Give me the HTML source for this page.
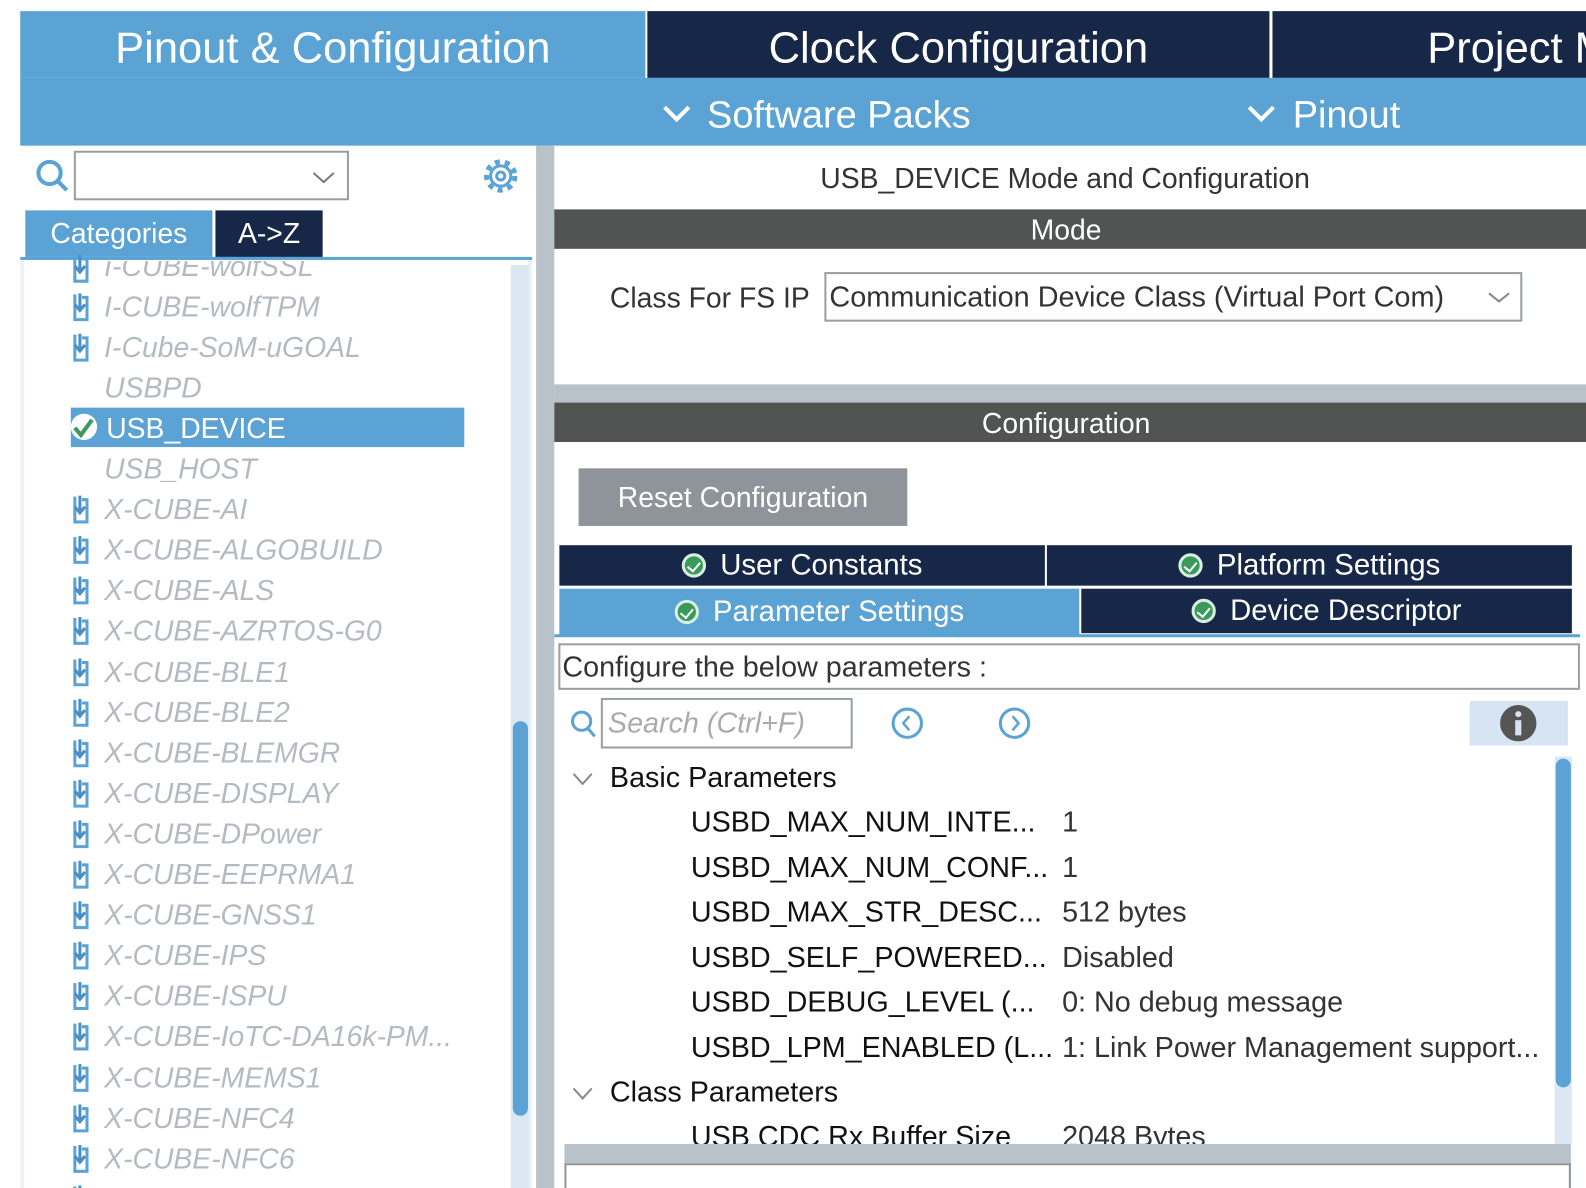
<!DOCTYPE html>
<html><head><meta charset="utf-8"><style>
*{margin:0;padding:0;box-sizing:border-box}
html,body{width:1586px;height:1188px;overflow:hidden}
body{background:#fff;font-family:"Liberation Sans",Arial,sans-serif;position:relative}
#w{position:absolute;left:0;top:0;width:1568px;height:1175px;transform:scale(1.0115);transform-origin:0 0}
.a{position:absolute;white-space:nowrap}
.c{display:flex;align-items:center;justify-content:center}
.li{position:absolute;left:103px;font-size:28px;font-style:italic;color:#b3bac2;line-height:40px}
.pn{position:absolute;left:683px;font-size:28.4px;color:#111;line-height:40px}
.pv{position:absolute;left:1050px;font-size:28.4px;color:#333;line-height:40px}
.ok{display:inline-block;width:24px;height:24px;border-radius:50%;background:#3a9a5b;border:3px solid #d8eee0;margin-right:14px;position:relative}
.ok:after{content:"";position:absolute;left:5px;top:3px;width:6px;height:10px;border-right:2px solid #fff;border-bottom:2px solid #fff;transform:rotate(40deg)}
.t{font-size:29px}
</style></head><body><div id="w">
<div class="a c" style="left:20px;top:11px;width:618px;height:66px;background:#5ba3d5;color:#fff;font-size:43px;padding-top:8px">Pinout &amp; Configuration</div>
<div class="a c" style="left:640px;top:11px;width:615px;height:66px;background:#162748;color:#fff;font-size:43px;padding-top:8px">Clock Configuration</div>
<div class="a" style="left:1258px;top:11px;width:310px;height:66px;background:#162748;color:#fff;font-size:43px;line-height:74px;padding-left:153px;overflow:hidden">Project Manager</div>
<div class="a" style="left:20px;top:77px;width:1548px;height:67px;background:#5ba3d5"></div>
<svg class="a" style="left:654px;top:102px" width="30" height="20"><path d="M3 4 L15 16 L27 4" stroke="#fff" stroke-width="4" fill="none"/></svg>
<div class="a" style="left:699px;top:92px;color:#fff;font-size:37.5px">Software Packs</div>
<svg class="a" style="left:1232px;top:102px" width="30" height="20"><path d="M3 4 L15 16 L27 4" stroke="#fff" stroke-width="4" fill="none"/></svg>
<div class="a" style="left:1278px;top:92px;color:#fff;font-size:37.5px">Pinout</div>

<svg class="a" style="left:34px;top:156px" width="36" height="36"><circle cx="15" cy="15" r="11" stroke="#5ba3d5" stroke-width="4" fill="none"/><path d="M23 23 L32 32" stroke="#5ba3d5" stroke-width="4"/></svg>
<div class="a" style="left:73px;top:149px;width:272px;height:49px;border:2px solid #9a9ea3"></div>
<svg class="a" style="left:308px;top:168px" width="24" height="14"><path d="M2 3 L12 12 L22 3" stroke="#777" stroke-width="2" fill="none"/></svg>
<svg class="a" style="left:476px;top:155px" width="38" height="38"><circle cx="19" cy="19" r="14" stroke="#5ba3d5" stroke-width="5" fill="none" stroke-dasharray="5 5"/><circle cx="19" cy="19" r="10" stroke="#5ba3d5" stroke-width="3" fill="none"/><circle cx="19" cy="19" r="4" stroke="#5ba3d5" stroke-width="3" fill="none"/></svg>
<div class="a c" style="left:25px;top:208px;width:185px;height:46px;background:#5ba3d5;color:#fff;font-size:28px">Categories</div>
<div class="a c" style="left:213px;top:208px;width:106px;height:46px;background:#162748;color:#fff;font-size:28px">A-&gt;Z</div>
<div class="a" style="left:20px;top:254px;width:506px;height:3px;background:#5ba3d5"></div>
<div class="a" style="left:20px;top:257px;width:506px;height:931px;border:4px solid #eef1f5;border-top:none"></div>
<div class="a" style="left:505px;top:262px;width:18px;height:926px;background:#dce7f4"></div>
<div class="a" style="left:507px;top:713px;width:15px;height:390px;background:#5ba3d5;border-radius:8px"></div>
<div class="a" style="left:28px;top:258px;width:476px;height:930px;overflow:hidden">
<div style="position:relative;left:-28px;top:-258px">
<div class="li" style="top:244px">I-CUBE-wolfSSL</div>
<div class="li" style="top:284px">I-CUBE-wolfTPM</div>
<div class="li" style="top:324px">I-Cube-SoM-uGOAL</div>
<div class="li" style="top:364px">USBPD</div>
<div class="a" style="left:70px;top:403px;width:389px;height:39px;background:#5ba3d5"></div>
<div class="a" style="left:70px;top:409px;width:26px;height:26px;border-radius:50%;background:#fff"></div>
<svg class="a" style="left:70px;top:409px" width="26" height="26"><path d="M4 14 L10 21 L21 6" stroke="#3a9a5b" stroke-width="4" fill="none"/></svg>
<div class="li" style="top:404px;font-style:normal;color:#fff;left:105px">USB_DEVICE</div>
<div class="li" style="top:444px">USB_HOST</div>
<div class="li" style="top:484px">X-CUBE-AI</div>
<div class="li" style="top:524px">X-CUBE-ALGOBUILD</div>
<div class="li" style="top:564px">X-CUBE-ALS</div>
<div class="li" style="top:604px">X-CUBE-AZRTOS-G0</div>
<div class="li" style="top:645px">X-CUBE-BLE1</div>
<div class="li" style="top:685px">X-CUBE-BLE2</div>
<div class="li" style="top:725px">X-CUBE-BLEMGR</div>
<div class="li" style="top:765px">X-CUBE-DISPLAY</div>
<div class="li" style="top:805px">X-CUBE-DPower</div>
<div class="li" style="top:845px">X-CUBE-EEPRMA1</div>
<div class="li" style="top:885px">X-CUBE-GNSS1</div>
<div class="li" style="top:925px">X-CUBE-IPS</div>
<div class="li" style="top:965px">X-CUBE-ISPU</div>
<div class="li" style="top:1005px">X-CUBE-IoTC-DA16k-PM...</div>
<div class="li" style="top:1046px">X-CUBE-MEMS1</div>
<div class="li" style="top:1086px">X-CUBE-NFC4</div>
<div class="li" style="top:1126px">X-CUBE-NFC6</div>
</div></div>
<svg class="a" style="left:70px;top:250px" width="22" height="938">
<defs><g id="d"><path d="M4 3 L4 28 L16 28 L16 6 L11 6" stroke="#5ba3d5" stroke-width="3" fill="none"/><path d="M9 2 L9 18 M4 13 L9 19 L14 13" stroke="#4a8fc4" stroke-width="3" fill="none"/></g></defs>
<use href="#d" y="0"/><use href="#d" y="38"/><use href="#d" y="78"/>
<use href="#d" y="238"/><use href="#d" y="278"/><use href="#d" y="318"/><use href="#d" y="358"/><use href="#d" y="399"/><use href="#d" y="439"/><use href="#d" y="479"/><use href="#d" y="519"/><use href="#d" y="559"/><use href="#d" y="599"/><use href="#d" y="639"/><use href="#d" y="679"/><use href="#d" y="719"/><use href="#d" y="759"/><use href="#d" y="800"/><use href="#d" y="840"/><use href="#d" y="880"/><use href="#d" y="920"/>
</svg>

<div class="a" style="left:530px;top:144px;width:18px;height:1044px;background:#b9c1c9"></div>

<div class="a c" style="left:548px;top:155px;width:1010px;height:44px;font-size:28px;color:#333">USB_DEVICE Mode and Configuration</div>
<div class="a c" style="left:548px;top:207px;width:1020px;height:39px;background:#525453;color:#fff;font-size:28px;padding-right:8px;padding-top:3px">Mode</div>
<div class="a" style="left:603px;top:275px;font-size:28px;color:#333;line-height:40px">Class For FS IP</div>
<div class="a" style="left:815px;top:269px;width:690px;height:49px;border:2px solid #9a9ea3;font-size:28.5px;color:#333;line-height:46px;padding-left:3px;overflow:hidden">Communication Device Class (Virtual Port Com)</div>
<svg class="a" style="left:1470px;top:287px" width="24" height="14"><path d="M2 3 L12 11 L22 3" stroke="#888" stroke-width="2" fill="none"/></svg>
<div class="a" style="left:548px;top:380px;width:1020px;height:18px;background:#b9c1c9"></div>
<div class="a c" style="left:548px;top:398px;width:1020px;height:39px;background:#525453;color:#fff;font-size:28px;padding-right:8px;padding-top:3px">Configuration</div>
<div class="a c" style="left:572px;top:463px;width:325px;height:57px;background:#8f949a;color:#fff;font-size:28px">Reset Configuration</div>

<div class="a c t" style="left:553px;top:539px;width:480px;height:40px;background:#162748;color:#fff"><span class="ok"></span>User Constants</div>
<div class="a c t" style="left:1035px;top:539px;width:519px;height:40px;background:#162748;color:#fff"><span class="ok"></span>Platform Settings</div>
<div class="a c t" style="left:553px;top:582px;width:514px;height:46px;background:#5ba3d5;color:#fff"><span class="ok"></span>Parameter Settings</div>
<div class="a c t" style="left:1069px;top:582px;width:485px;height:44px;background:#162748;color:#fff"><span class="ok"></span>Device Descriptor</div>
<div class="a" style="left:548px;top:627px;width:1014px;height:3px;background:#5ba3d5"></div>
<div class="a" style="left:552px;top:636px;width:1010px;height:46px;border:2px solid #9a9ea3;font-size:28.4px;color:#333;line-height:44px;padding-left:2px">Configure the below parameters :</div>
<svg class="a" style="left:563px;top:701px" width="28" height="30"><circle cx="12" cy="12" r="9" stroke="#5ba3d5" stroke-width="3" fill="none"/><path d="M18 19 L25 27" stroke="#5ba3d5" stroke-width="3"/></svg>
<div class="a" style="left:594px;top:690px;width:249px;height:50px;border:2px solid #9a9ea3;font-size:28.4px;font-style:italic;color:#aaa;line-height:46px;padding-left:5px;overflow:hidden">Search (Ctrl+F)</div>
<svg class="a" style="left:880px;top:698px" width="34" height="34"><circle cx="17" cy="17" r="14" stroke="#5ba3d5" stroke-width="3" fill="none"/><path d="M19 10 L13 17 L19 24" stroke="#5ba3d5" stroke-width="2.5" fill="none"/></svg>
<svg class="a" style="left:986px;top:698px" width="34" height="34"><circle cx="17" cy="17" r="14" stroke="#5ba3d5" stroke-width="3" fill="none"/><path d="M15 10 L21 17 L15 24" stroke="#5ba3d5" stroke-width="2.5" fill="none"/></svg>
<div class="a" style="left:1453px;top:693px;width:97px;height:44px;background:#d6e4f3"></div>
<svg class="a" style="left:1483px;top:697px" width="36" height="36"><circle cx="18" cy="18" r="18" fill="#555"/><circle cx="18" cy="9" r="3" fill="#d6e4f3"/><rect x="15" y="15" width="6" height="15" fill="#d6e4f3"/></svg>

<div class="a" style="left:1537px;top:748px;width:17px;height:383px;background:#dce7f4"></div>
<div class="a" style="left:1538px;top:750px;width:15px;height:325px;background:#5ba3d5;border-radius:8px"></div>
<svg class="a" style="left:565px;top:762px" width="24" height="16"><path d="M2 3 L11 13 L20 3" stroke="#888" stroke-width="2" fill="none"/></svg>
<div class="a" style="left:603px;top:749px;font-size:28.4px;color:#111;line-height:40px">Basic Parameters</div>
<div class="pn" style="top:793px">USBD_MAX_NUM_INTE...</div><div class="pv" style="top:793px">1</div>
<div class="pn" style="top:838px">USBD_MAX_NUM_CONF...</div><div class="pv" style="top:838px">1</div>
<div class="pn" style="top:882px">USBD_MAX_STR_DESC...</div><div class="pv" style="top:882px">512 bytes</div>
<div class="pn" style="top:927px">USBD_SELF_POWERED...</div><div class="pv" style="top:927px">Disabled</div>
<div class="pn" style="top:971px">USBD_DEBUG_LEVEL (...</div><div class="pv" style="top:971px">0: No debug message</div>
<div class="pn" style="top:1016px">USBD_LPM_ENABLED (L...</div><div class="pv" style="top:1016px">1: Link Power Management support...</div>
<svg class="a" style="left:565px;top:1073px" width="24" height="16"><path d="M2 3 L11 13 L20 3" stroke="#888" stroke-width="2" fill="none"/></svg>
<div class="a" style="left:603px;top:1060px;font-size:28.4px;color:#111;line-height:40px">Class Parameters</div>
<div class="a" style="left:548px;top:1104px;width:988px;height:27px;overflow:hidden">
<div class="pn" style="top:0;left:135px">USB CDC Rx Buffer Size</div><div class="pv" style="top:0;left:502px">2048 Bytes</div></div>
<div class="a" style="left:558px;top:1131px;width:995px;height:19px;background:#b9c1c9"></div>
<div class="a" style="left:558px;top:1150px;width:995px;height:38px;border:2px solid #8f949a;border-bottom:none;background:#fff"></div>
</div></body></html>
